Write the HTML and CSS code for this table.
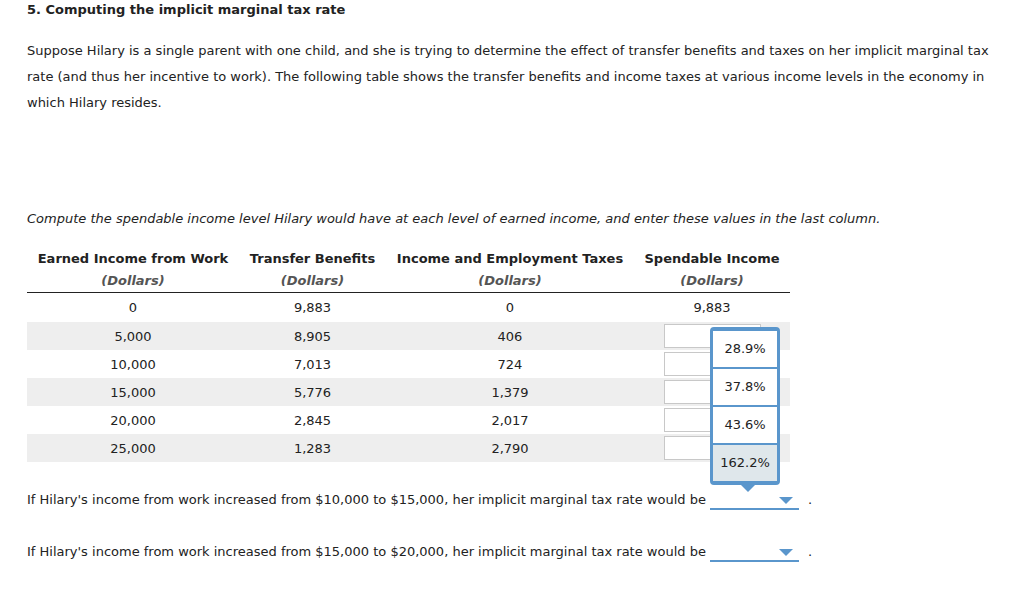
FILE: index.html
```html
<!DOCTYPE html>
<html lang="en">
<head>
    <meta charset="UTF-8">
    <title>Computing the implicit marginal tax rate</title>
    <link rel="stylesheet" href="styles.css">
</head>
<body>
    <div class="question-wrap">
        <h2 class="title">5. Computing the implicit marginal tax rate</h2>

        <p class="intro">Suppose Hilary is a single parent with one child, and she is trying to determine the effect of transfer benefits and taxes on her implicit marginal tax rate (and thus her incentive to work). The following table shows the transfer benefits and income taxes at various income levels in the economy in which Hilary resides.</p>

        <p class="instruction">Compute the spendable income level Hilary would have at each level of earned income, and enter these values in the last column.</p>

        <table class="tax-table">
            <thead>
                <tr>
                    <th class="c1">Earned Income from Work</th>
                    <th class="c2">Transfer Benefits</th>
                    <th class="c3">Income and Employment Taxes</th>
                    <th class="c4">Spendable Income</th>
                </tr>
                <tr class="units">
                    <th>(Dollars)</th>
                    <th>(Dollars)</th>
                    <th>(Dollars)</th>
                    <th>(Dollars)</th>
                </tr>
            </thead>
            <tbody>
                <tr><td>0</td><td>9,883</td><td>0</td><td>9,883</td></tr>
                <tr class="shade"><td>5,000</td><td>8,905</td><td>406</td><td><input type="text" class="answer"></td></tr>
                <tr><td>10,000</td><td>7,013</td><td>724</td><td><input type="text" class="answer"></td></tr>
                <tr class="shade"><td>15,000</td><td>5,776</td><td>1,379</td><td><input type="text" class="answer"></td></tr>
                <tr><td>20,000</td><td>2,845</td><td>2,017</td><td><input type="text" class="answer"></td></tr>
                <tr class="shade"><td>25,000</td><td>1,283</td><td>2,790</td><td><input type="text" class="answer"></td></tr>
            </tbody>
        </table>

        <p class="sentence first">If Hilary's income from work increased from $10,000 to $15,000, her implicit marginal tax rate would be
            <span class="select">
                <span class="caret"></span>
                <span class="popup">
                    <span class="option">28.9%</span>
                    <span class="option">37.8%</span>
                    <span class="option">43.6%</span>
                    <span class="option active">162.2%</span>
                </span>
            </span><span class="dot">.</span></p>

        <p class="sentence">If Hilary's income from work increased from $15,000 to $20,000, her implicit marginal tax rate would be
            <span class="select"><span class="caret"></span></span><span class="dot">.</span></p>
    </div>
</body>
</html>
```

FILE: styles.css
```css
body {
    margin: 0;
    font-family: "DejaVu Sans", Verdana, sans-serif;
    font-size: 13px;
    color: #222;
    background: white;
}

.question-wrap {
    padding: 1px 27px 0;
}

.title {
    margin: 0;
    font-size: 13px;
    line-height: 18px;
    font-weight: bold;
}

.intro {
    margin: 19px 0 0;
    line-height: 26px;
}

.instruction {
    margin: 90px 0 0;
    line-height: 26px;
    font-style: italic;
}

.tax-table {
    margin-top: 15px;
    border-collapse: collapse;
    width: 763px;
}

.tax-table th {
    font-weight: bold;
    padding: 0;
    height: 24px;
    line-height: 24px;
    text-align: center;
}

.tax-table .c1 { width: 212px; }
.tax-table .c2 { width: 147px; }
.tax-table .c3 { width: 248px; }
.tax-table .c4 { width: 156px; }

.tax-table .units th {
    font-style: italic;
    color: #555;
    height: 21px;
    line-height: 20px;
    vertical-align: top;
    border-bottom: 1px solid #222;
}

.tax-table td {
    height: 28px;
    padding: 0;
    text-align: center;
    vertical-align: middle;
}

.tax-table tbody tr:first-child td {
    height: 29px;
}

.tax-table .shade td {
    background: #eeeeee;
}

.answer {
    width: 97px;
    height: 24px;
    box-sizing: border-box;
    border: 1px solid #c8c8c8;
    background: white;
    margin: 0;
    padding: 0 4px;
    vertical-align: middle;
}

.sentence {
    margin: 26px 0 0;
    line-height: 26px;
}

.sentence.first {
    margin-top: 25px;
}

.select {
    position: relative;
    display: inline-block;
    width: 89px;
    height: 18px;
    border-bottom: 2px solid #5a96cc;
    vertical-align: -6px;
}

.caret {
    position: absolute;
    right: 6px;
    top: 7px;
    width: 0;
    height: 0;
    border-left: 7px solid transparent;
    border-right: 7px solid transparent;
    border-top: 7px solid #5a96cc;
}

.dot {
    margin-left: 9px;
}

.popup {
    position: absolute;
    left: 0;
    bottom: 23px;
    width: 70px;
    box-sizing: border-box;
    border: 4px solid #5a96cc;
    border-left-width: 3px;
    border-right-width: 3px;
    border-radius: 4px;
    background: #5a96cc;
    display: flex;
    flex-direction: column;
    gap: 2px;
}

.popup::after {
    content: "";
    position: absolute;
    left: 27px;
    bottom: -11px;
    border-left: 8px solid transparent;
    border-right: 8px solid transparent;
    border-top: 8px solid #5a96cc;
}

.option {
    display: block;
    height: 36px;
    line-height: 36px;
    text-align: center;
    background: white;
    color: #222;
}

.option.active {
    background: #dfe7eb;
}
```
